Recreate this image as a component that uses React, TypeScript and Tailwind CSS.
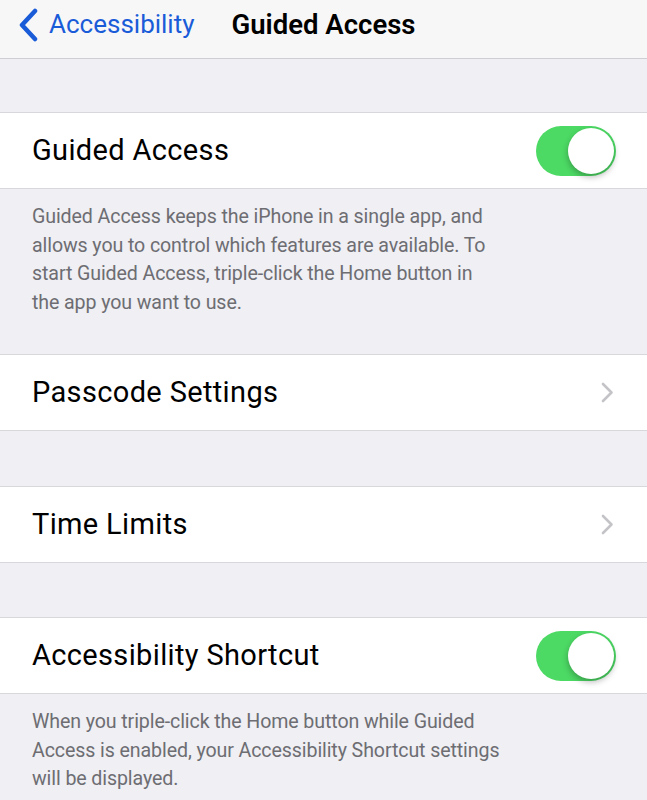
function Toggle() {
    return (
        <div className="w-[80px] h-[50px] rounded-full bg-[#4cd964] p-[2px] flex justify-end">
            <div className="w-[46px] h-[46px] rounded-full bg-white shadow-[0_3px_6px_rgba(0,0,0,0.28)]" />
        </div>
    )
}

function Chevron() {
    return (
        <svg width="13" height="21" viewBox="0 0 13 21" fill="none" className="mr-[2px]">
            <path d="M2 2 L10.5 10.5 L2 19" stroke="#c4c4c8" strokeWidth="2.6" strokeLinecap="round" strokeLinejoin="round" />
        </svg>
    )
}

function Row({ label, toggle }: { label: string; toggle?: boolean }) {
    return (
        <div className="h-[77px] bg-white border-y border-[#d8d8dc] flex items-center justify-between pl-[32px] pr-[31px]">
            <span className="text-[29px] text-black tracking-[0.35px]">{label}</span>
            {toggle ? <Toggle /> : <Chevron />}
        </div>
    )
}

function Footer({ lines }: { lines: string[] }) {
    return (
        <div className="px-[32px] pt-[14px] text-[19.6px] leading-[28.5px] text-[#6d6d72] tracking-[-0.1px]">
            {lines.map(line => (
                <p key={line}>{line}</p>
            ))}
        </div>
    )
}

export default function App() {
    return (
        <div className="w-[647px] h-[800px] overflow-hidden bg-[#efeff4] font-['Roboto',sans-serif]">
            <div className="h-[59px] pb-[9px] bg-[#f7f7f8] border-b border-[#cfcfd3] relative flex items-center">
                <div className="flex items-center pl-[18px] gap-[10px] text-[#1a5bd8]">
                    <svg width="21" height="34" viewBox="0 0 21 34" fill="none">
                        <path d="M17 3 L4 17 L17 31" stroke="currentColor" strokeWidth="4.5" strokeLinecap="round" strokeLinejoin="round" />
                    </svg>
                    <span className="text-[26px]">Accessibility</span>
                </div>
                <span className="absolute left-0 right-0 text-center text-[27.5px] font-semibold text-black pointer-events-none">
                    Guided Access
                </span>
            </div>

            <div className="h-[53px]" />
            <Row label="Guided Access" toggle />
            <div className="h-[165px]">
                <Footer
                    lines={[
                        "Guided Access keeps the iPhone in a single app, and",
                        "allows you to control which features are available. To",
                        "start Guided Access, triple-click the Home button in",
                        "the app you want to use.",
                    ]}
                />
            </div>
            <Row label="Passcode Settings" />
            <div className="h-[55px]" />
            <Row label="Time Limits" />
            <div className="h-[54px]" />
            <Row label="Accessibility Shortcut" toggle />
            <Footer
                lines={[
                    "When you triple-click the Home button while Guided",
                    "Access is enabled, your Accessibility Shortcut settings",
                    "will be displayed.",
                ]}
            />
        </div>
    )
}
